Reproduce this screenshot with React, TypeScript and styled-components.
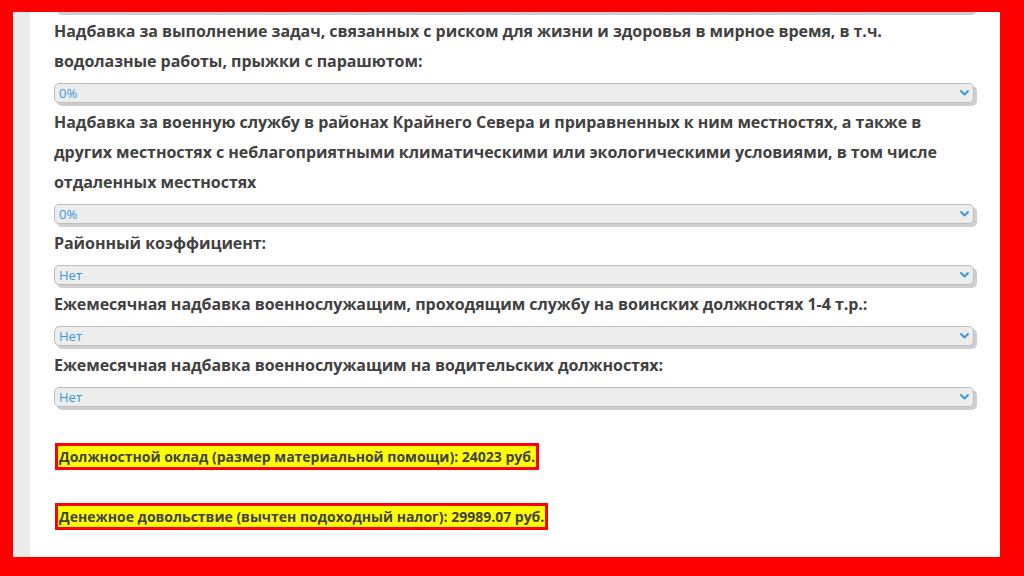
import React from "react";
import styled, { createGlobalStyle } from "styled-components";

const Global = createGlobalStyle`
  html, body { margin: 0; padding: 0; }
  body {
    background: #ff0000;
    width: 1024px;
    height: 576px;
    overflow: hidden;
    font-family: "Open Sans", "Noto Sans", sans-serif;
  }
`;

const Frame = styled.div`
  margin: 12px 0 0 13px;
  width: 987px;
  height: 545px;
  display: flex;
  overflow: hidden;
  background: #ffffff;
`;

const SideStrip = styled.div`
  width: 17px;
  flex: none;
  background: #ebebeb;
`;

const Content = styled.div`
  flex: 1;
  padding: 0 23px 0 24px;
  display: flex;
  flex-direction: column;
`;

const Label = styled.div`
  font-size: 16px;
  font-weight: 700;
  line-height: 30px;
  color: #414141;
  white-space: nowrap;
  letter-spacing: -0.05px;
`;

const SelectWrap = styled.div<{ $top?: boolean }>`
  position: relative;
  flex: none;
  width: 920px;
  height: 20px;
  margin: ${(p) => (p.$top ? "-20px 0 4px" : "7px 0 4px")};
`;

const Select = styled.select`
  appearance: none;
  -webkit-appearance: none;
  box-sizing: border-box;
  display: block;
  width: 920px;
  height: 20px;
  margin: 0;
  padding: 0 0 0 4px;
  border: 1px solid #bdbdbd;
  border-radius: 5px;
  background: #ededed;
  box-shadow: 3px 3px 0 #cfcfcf;
  color: #3597d9;
  font-family: "Open Sans", "Noto Sans", sans-serif;
  font-size: 13px;
  line-height: 18px;
  outline: none;
`;

const Chevron = styled.svg`
  position: absolute;
  right: 5px;
  top: 7px;
  width: 9px;
  height: 6px;
  pointer-events: none;
`;

const Spacer = styled.div<{ $h: number }>`
  height: ${(p) => p.$h}px;
  flex: none;
`;

const Result = styled.div`
  align-self: flex-start;
  flex: none;
  border: 3px solid #ff0000;
  background: #ffff00;
  color: #414141;
  font-size: 14px;
  font-weight: 700;
  line-height: 21px;
  padding: 0 1px;
  margin-left: 1px;
  white-space: nowrap;
`;

const Field = ({ value, top }: { value: string; top?: boolean }) => (
  <SelectWrap $top={top}>
    <Select defaultValue={value}>
      <option value={value}>{value}</option>
    </Select>
    <Chevron viewBox="0 0 9 6">
      <path d="M1 1 L4.5 4.5 L8 1" fill="none" stroke="#3597d9" strokeWidth="1.8" strokeLinecap="round" strokeLinejoin="round" />
    </Chevron>
  </SelectWrap>
);

export default function App() {
  return (
    <>
      <Global />
      <Frame>
        <SideStrip />
        <Content>
          <Field value="0%" top />
          <Label>
            Надбавка за выполнение задач, связанных с риском для жизни и здоровья в мирное время, в т.ч.
            <br />
            водолазные работы, прыжки с парашютом:
          </Label>
          <Field value="0%" />
          <Label>
            Надбавка за военную службу в районах Крайнего Севера и приравненных к ним местностях, а также в
            <br />
            других местностях с неблагоприятными климатическими или экологическими условиями, в том числе
            <br />
            отдаленных местностях
          </Label>
          <Field value="0%" />
          <Label>Районный коэффициент:</Label>
          <Field value="Нет" />
          <Label>Ежемесячная надбавка военнослужащим, проходящим службу на воинских должностях 1-4 т.р.:</Label>
          <Field value="Нет" />
          <Label>Ежемесячная надбавка военнослужащим на водительских должностях:</Label>
          <Field value="Нет" />
          <Spacer $h={32} />
          <Result>Должностной оклад (размер материальной помощи): 24023 руб.</Result>
          <Spacer $h={33} />
          <Result>Денежное довольствие (вычтен подоходный налог): 29989.07 руб.</Result>
        </Content>
      </Frame>
    </>
  );
}
